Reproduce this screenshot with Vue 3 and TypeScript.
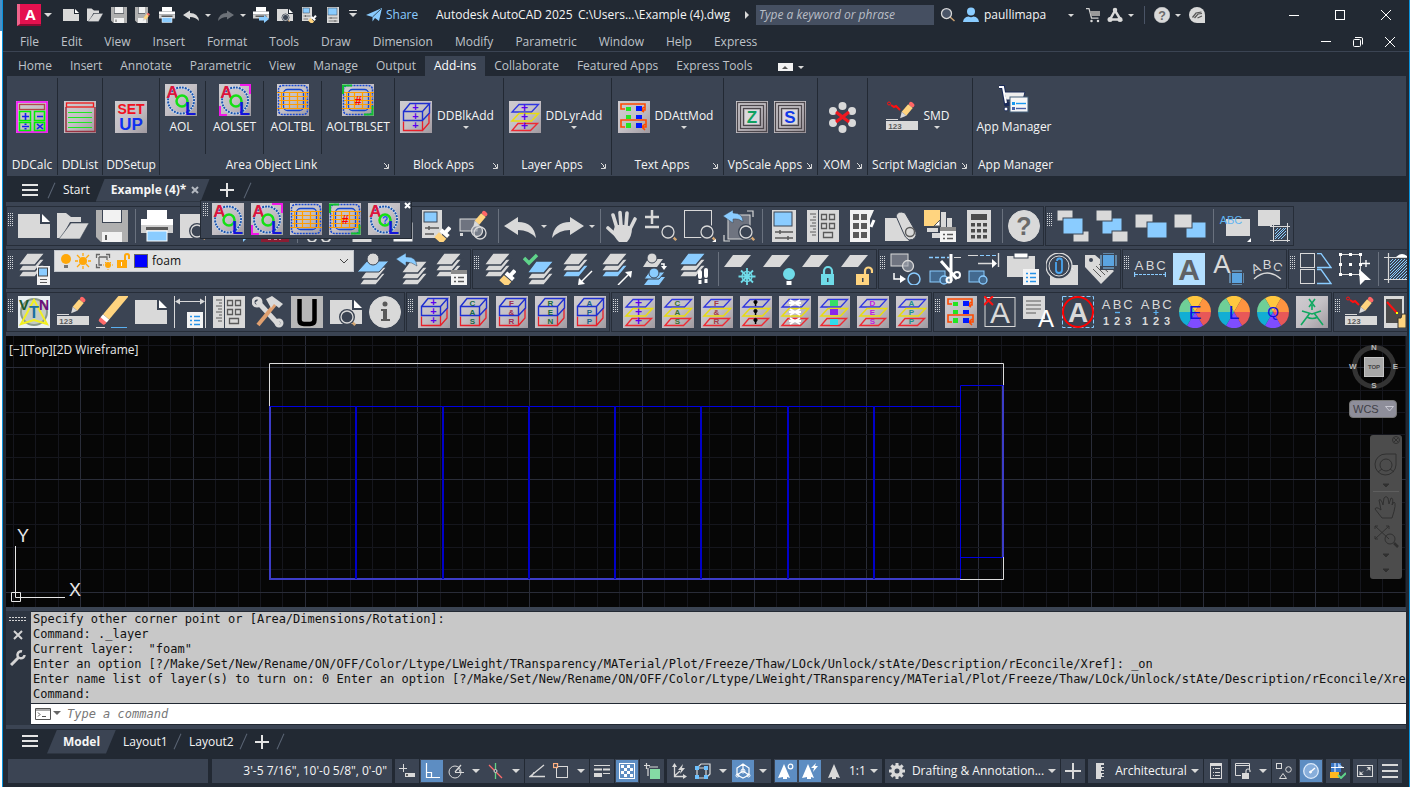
<script setup lang="ts">
import { h, ref } from 'vue'

const G = '#d9d9d9'
const B = '#8accff'
const Y = '#ffd47f'
const D = '#3b4453'
const K = '#5a5a5a'

const tile = '<rect width="32" height="32" fill="url(#metal)"/>'
const t = (x: number, y: number, s: number, c: string, str: string, extra = 'font-weight="bold"') =>
  `<text x="${x}" y="${y}" font-size="${s}" fill="${c}" text-anchor="middle" font-family="Liberation Sans, sans-serif" ${extra}>${str}</text>`
const line = (d: string, c: string, w = 1, extra = '') =>
  `<path d="${d}" fill="none" stroke="${c}" stroke-width="${w}" ${extra}/>`
const fill = (d: string, c: string, extra = '') => `<path d="${d}" fill="${c}" ${extra}/>`
const box = (x: number, y: number, w: number, hh: number, c: string, extra = '') =>
  `<rect x="${x}" y="${y}" width="${w}" height="${hh}" fill="${c}" ${extra}/>`
const ring = (x: number, y: number, r: number, c: string, w = 1, f = 'none') =>
  `<circle cx="${x}" cy="${y}" r="${r}" fill="${f}" stroke="${c}" stroke-width="${w}"/>`

const magnifier = (x: number, y: number, r = 6) =>
  line(`M${x + r * 0.7} ${y + r * 0.7}L${x + r * 0.7 + 4} ${y + r * 0.7 + 4}`, '#d3a672', 2.5) +
  ring(x, y, r + 1, D, 2) + ring(x, y, r, G, 1.3, D)
const pencil = (x: number, y: number) =>
  `<g transform="translate(${x} ${y}) rotate(40)">` +
  box(-3, 0, 6, 4, '#ff6666', 'rx="2"') + box(-3, 4, 6, 10, Y) + fill('M-3 14h6l-3 6z', G) + '</g>'
const brush = (x: number, y: number) =>
  `<g transform="translate(${x} ${y}) rotate(42)">` +
  box(-2, -9, 4, 7, '#fff', 'rx="1"') + box(-5, -3, 10, 4, '#fff') + box(-5, 2, 10, 7, Y) + '</g>'

const aol = (over = '') =>
  tile + line('M16 3.5a13 13 0 1 0 .1 0z', '#dfe6f2', 2.5) +
  line('M16 3.5a13 13 0 1 0 .1 0z', '#1c55ad', 2, 'stroke-dasharray="2 1"') + over +
  t(7.5, 14, 17, '#dc143c', 'A') + ring(17, 17, 5.5, '#14e014', 2.5) + t(25.5, 31, 18, '#1414d8', 'L')
const corners = (c: string, flip = false) =>
  flip ? line('M1 10V1.5H10M22 30.5H30.5V22', c, 2) : line('M21 1H31V10M1 22V31H8', c, 2)
const table = (over = '') =>
  tile +
  box(1.5, 1.5, 29, 29, 'none', 'rx="4" stroke="#1648d0" stroke-width="1.5" stroke-dasharray="2 1"') +
  box(6.5, 5.5, 20, 21, 'none', 'rx="4" stroke="#1648d0" stroke-width="1.3"') +
  line('M0 8.5H32M2 12.5H31M2 16.5H31M2 20.5H31M0 24.5H32M4.5 8V24M12.5 8V24M20.5 8V24M28.5 8V24', '#ff9d00', 1.2) + over

const block = (a: string, b: string, c: string, col = '#5a00f0') =>
  tile +
  line('M3.5 20.5V29.5H22.5V20M22.5 29.5L29 22V12', '#e8202a', 1.3) +
  line('M3.5 10.5H22.5V19.5H3.5zM3.5 10.5L10 2.5H29.5L22.5 10.5M29.5 2.5V12L22.5 19.5', '#1e2fd0', 1.4) +
  [a, b, c].map((s, i) => t(15.5, 9.5 + i * 9.3, a === '+' ? 11 : 8, col, s)).join('')
const layerBase =
  tile + line('M10 3.5H29.5L22.5 11H3z', '#2e35e0', 1.3) +
  line('M10 12.5H29.5L22.5 20H3z', '#e8dc10', 1.5) +
  line('M9 22.5H28.5L21.5 29.5H3z', '#ee2a33', 1.4)
const layer = (a: string, b: string, c: string, col = '#5a00f0') =>
  layerBase + [a, b, c].map((s, i) => t(15.5, (s === '+' ? 11 : 10) + i * 9.2, s === '+' ? 12 : 8, col, s)).join('')
const sheet = (y: number, c: string, x = 0) =>
  fill(`M${x + 9} ${y}h18l-10 12h-17z`, c, `stroke="${D}" stroke-width="1.4"`)
const stack = (c1 = G, c2 = G, c3 = G, y = 0, x = 0) => sheet(y + 12, c3, x) + sheet(y + 6, c2, x) + sheet(y, c1, x)
const oneSheet = fill('M9 2h18l-10 12h-17z', G)

const wheelColors = ['#ffc740', '#ff9440', '#e85858', '#7f4dff', '#12aed4', '#6fcf97']
const wheel = (ch: string, size = 19) => {
  const p = (deg: number) => {
    const a = (deg * Math.PI) / 180
    return `${(16 + 16 * Math.sin(a)).toFixed(2)} ${(16 - 16 * Math.cos(a)).toFixed(2)}`
  }
  return wheelColors
    .map((c, i) => fill(`M16 16L${p(i * 60 - 30)}A16 16 0 0 1 ${p(i * 60 + 30)}z`, c)).join('') +
    t(16, 16 + size * 0.36, size, '#1010e0', ch, '')
}
const abc = (mark: string) =>
  t(5, 13, 13, G, 'A', '') + t(16, 13, 13, G, 'B', '') + t(27, 13, 13, G, 'C', '') + mark +
  t(5, 29, 11, G, '1') + t(16, 29, 11, G, '2') + t(27, 29, 11, G, '3')
const gears = (c: string) =>
  Array.from({ length: 8 }, (_, i) => `<rect x="6.5" y="0" width="3" height="4" fill="${c}" transform="rotate(${i * 45} 8 8)"/>`).join('') +
  ring(8, 8, 4.2, c, 3.4)
const scaleTile = (ch: string, c: string) =>
  tile + [1, 4, 7].map((n) => box(n + 0.5, n + 0.5, 31 - 2 * n, 31 - 2 * n, 'none', 'stroke="#4c474c" stroke-width="1.3"')).join('') +
  box(9, 9, 14, 14, '#dcd8dc') + t(16, 22, 17, c, ch)
const attMod =
  tile + line('M7 8H3V3H27V9H24M26 6L23 9L26 11M7 26H3V19H28V26H25M27 23L24 26L27 29', '#ff4a00', 1.6) +
  box(8, 6, 5, 4, '#22e622') + box(8, 14, 5, 4, '#22e622') + box(8, 22, 5, 5, '#22e622') +
  box(18, 5, 6, 5, '#0018ff') + box(18, 14, 6, 4, '#0018ff') + box(18, 22, 6, 5, '#0018ff')
const penLabel = box(0, 20, 32, 9, G) + t(9, 28, 8, K, '123') + line('M0 18.5H12', G, 1)
const page = fill('M0 4h22v10h10v14H0z', G) + fill('M24 4l8 8h-8z', '#fff')
const list = (x: number, y: number, c = '#2792e8', top = '') =>
  box(x, y, 16, 16, '#f4f4f4') + top +
  line(`M${x + 3} ${y + 4.5}h2m2 0h6M${x + 3} ${y + 8.5}h2m2 0h6M${x + 3} ${y + 12.5}h2m2 0h6`, c, 1.4)
const windowList =
  box(16, 17, 16, 15, '#f4f4f4') + box(16, 17, 16, 4, '#8b8b8b') + line('M19 24.5h2m2 0h6M19 28.5h2m2 0h6', K, 1.4)
const shapes = (c: string, y = 0) =>
  box(1, y + 1, 17, 12, '#6f7480', `stroke="${c}"`) + ring(18, y + 13, 5.5, c, 1.3, 'rgba(160,165,175,.6)')
const shapesBlue =
  box(1, 18, 15, 11, '#436a90', `stroke="${B}"`) + ring(15, 27, 4, B, 1.3, '#436a90')
const bigBox = (x: number, y: number, w: number, hh: number, c: string) => box(x, y, w, hh, c, `stroke="${D}" stroke-width="1"`)
const crossbox = (x: number, y: number, s: number) =>
  box(x + 2, y + 2, s, s, '#5ba4e0') +
  line(`M${x} ${y + 2}v${s}M${x + s + 4} ${y + 2}v${s}M${x + 2} ${y}h${s}M${x + 2} ${y + s + 4}h${s}`, B, 1)
const hatch = (x: number, y: number, s: number) =>
  line(Array.from({ length: Math.floor(s / 3) }, (_, i) => `M${x} ${y + (i + 1) * 3}L${x + (i + 1) * 3} ${y}M${x + i * 3} ${y + s}L${x + s} ${y + i * 3}`).join(''), B, 1)
const hand = (c: string) =>
  line('M11 18L7 5M15 16L14 2.5M20 16L21 3M24 19L29 9M12 27L2 18', c, 3.6, 'stroke-linecap="round"') +
  fill('M9 16Q16 13 26 17Q26 27 21 32H13Q8 27 7 22z', c)
const lockBody = (c: string, open = false) =>
  line(open ? 'M24 23V18a3.5 3.5 0 0 1 7 0V20' : 'M22 23V18a4 4 0 0 1 8 0V23', c, 2.2) +
  box(open ? 15 : 19, 21, 13, 11, c) + box(open ? 21 : 25, 25, 1.5, 4, D)
const bulb = (c: string) => ring(26, 21, 5, c, 2, c) + box(23.5, 28, 5, 4, '#fff')
const props = box(4, 0, 24, 32, G) + box(6, 2, 18, 14, B, `stroke="${D}"`) + line('M7 22H25M7 28H25M12 20V24M20 26V30', K, 1.5)
const undo = (c: string) => fill('M0 16L14 7V12Q30 12 32 28Q25 20 14 20V25z', c)
const textA = (x: number, y: number, s: number, c: string) => t(x, y, s, c, 'A', '')

const big: Record<string, string> = {
  newf: page,
  open: fill('M0 3h9l5 4h10v5H13L4 28H0z', G) + fill('M14 13h18l-9 16H2z', G, `stroke="${D}" stroke-width=".6"`),
  save: fill('M0 0h6v13h20V0h6v32H5l-5-5z', '#b0b0b0') + box(7, 0, 18, 12, '#f2f2f2') + box(6, 22, 20, 10, '#f2f2f2') + box(9, 25, 2, 5, K),
  saveas: fill('M0 0h6v13h14V0h6v32H5l-5-5z', '#b0b0b0') + box(7, 0, 13, 12, '#f2f2f2') + box(6, 22, 16, 10, '#f2f2f2') + pencil(28, 13),
  print: box(6, 0, 20, 9, '#fff') + box(0, 9, 32, 6, '#fff') + box(0, 15, 32, 8, '#cfcfcf') + box(5, 17, 22, 3, K) + box(6, 21, 20, 10, B, 'stroke="#fff"'),
  plot: box(6, 0, 20, 9, '#fff') + box(0, 9, 32, 6, '#fff') + box(0, 15, 32, 8, '#cfcfcf') + box(5, 17, 22, 3, K) + fill('M12 20h10v-4l10 8l-10 8v-5H12z', B),
  preview: page + magnifier(17, 21, 6),
  undo: undo(G),
  undoT: undo(G),
  redoT: `<g transform="translate(32 0) scale(-1 1)">${undo('#6c7178')}</g>`,
  redo: `<g transform="translate(32 0) scale(-1 1)">${undo(G)}</g>`,
  matchp: box(2, 0, 20, 28, G) + box(4, 2, 13, 10, B, `stroke="${D}"`) + line('M5 18H19M5 24H14M9 16V20', K, 1.5) + brush(24, 24),
  props,
  share: fill('M0 16L32 2L26 28L18 22L13 29V20z', B) + line('M13 20L30 4', '#222933', 1.5),
  publish: box(0, 6, 22, 20, G) + fill('M18 20h6v-5l8 9l-8 8v-5h-6z', B),
  dwf: box(4, 4, 22, 16, G) + box(3, 16, 28, 16, '#8c1d33') + box(10, 28, 3, 1.5, '#fff') + box(16, 28, 3, 1.5, '#fff') + box(21, 28, 2, 1.5, '#fff'),
  cut: line('M8 2L22 26M24 2L10 26', G, 3) + ring(9, 28, 4, G, 2) + ring(23, 28, 4, G, 2),
  copy: box(2, 2, 18, 24, G) + bigBox(10, 8, 20, 25, G),
  paste: box(2, 4, 20, 24, G) + bigBox(12, 12, 20, 20, '#f4f4f4'),
  blocked: shapes(G, 8) + box(1, 23, 3, 3, G) + ring(21, 23, 6, G, 1.3) + pencil(27, 2),
  pan: hand(G),
  zoomrt: line('M0 7H14M7 0V14M0 17H14', G, 2.5) + magnifier(23, 22, 6),
  zoomwin: box(0.5, 0.5, 27, 27, 'none', `stroke="${G}"`) + magnifier(23, 22, 6) + fill('M32 29v3h-4z', '#fff'),
  zoomprev: box(5, 5, 22, 24, '#6f7480', `stroke="${G}"`) + line('M24 1H30V7M1 25V31H7', G, 1.2) + fill('M0 6L10 0V3Q20 3 20 12Q16 8 10 9V13z', B, `stroke="${D}" stroke-width=".5"`) + magnifier(23, 22, 6),
  dcenter: box(0, 0, 11, 32, G) + box(12, 0, 20, 32, G) + line('M9 4H3M9 7H6M9 10H3M9 13H5M9 16H3M9 19H6M9 22H3M9 25H5', K) + line('M14.5 4.5h5v5h-5zM22.5 4.5h5v5h-5zM14.5 13.5h5v5h-5zM22.5 13.5h5v5h-5zM16.5 22.5h9v5h-9z', K, 1.3),
  palettes: fill('M4 0H28L24 9V32H4z', '#f2f2f2') + [4, 13, 22].map((y) => box(7, y, 6, 6, K) + box(15, y, 6, 6, K)).join('') + line('M25 17L28 10', '#fff', 3),
  sheetset: fill('M0 8H13L24 31H0z', G) + fill('M11 6Q13 0 20 3L31 22Q32 30 24 30Q20 28 18 22z', G, `stroke="${D}"`) + ring(25, 22, 4.5, K, 1.4, G),
  markup: box(0, 0, 16, 16, Y) + fill('M16 10v6h-6z', '#fff', 'stroke="#5a5a5a"') + box(17, 2, 5, 16, G) + box(23, 8, 5, 9, G) + box(3, 18, 11, 4, G) + box(8, 23, 8, 5, G) + windowList,
  calc: box(4, 0, 24, 32, G) + box(8, 4, 16, 6, '#4b4b4b') + [13, 19, 25].map((y) => [8, 14, 20].map((x) => box(x, y, 4, 3.5, '#4b4b4b')).join('')).join(''),
  help: ring(16, 16, 15.5, G, 1, G) + t(16, 25, 25, '#6a6a6a', '?'),
  front: bigBox(0, 0, 16, 11, G) + bigBox(16, 21, 16, 11, G) + bigBox(6, 8, 20, 16, B),
  back: bigBox(6, 8, 20, 16, B) + bigBox(0, 0, 16, 11, G) + bigBox(16, 21, 16, 11, G),
  above: bigBox(0, 4, 18, 14, G) + bigBox(12, 12, 20, 16, B),
  under: bigBox(12, 12, 20, 16, B) + bigBox(0, 4, 18, 14, G),
  textfront: box(7, 9, 24, 17, G) + t(12, 14, 11, '#5fb4f2', 'ABC', '') + fill('M32 28v4h-4z', '#fff'),
  hatchback: box(0, 0, 22, 16, G) + box(14, 15, 17, 17, D) + line('M15.5 13V32M29.5 13V32M12 16.5H32M12 30.5H32', G) + hatch(17, 18, 11),
  layerprops: stack() + box(19, 13, 13, 19, '#f2f2f2') + box(20.5, 15, 9, 8, B, 'stroke="#444"') + line('M22 26.5H29M22 29.5H29', K),
  curlayer: sheet(20, G, 2) + sheet(14, G, 3) + fill('M10 8h22l-10 11H0z', B, `stroke="${D}"`) + ring(16, 6, 6, D, 1, G),
  prevlayer: stack(G, G, G, 8, 5) + fill('M0 6L10 0V4Q20 3 21 13Q16 9 10 9V13z', B, `stroke="${D}" stroke-width=".5"`),
  layerstate: stack() + windowList,
  laymatch: stack() + brush(25, 24),
  laymcur: stack(B, G, G, 8, 4) + line('M1 5L6 10L14 2', '#5fd38a', 3.5),
  layiso: stack(G, G, B) + line('M30 18L19 29', '#fff', 1.5) + fill('M16 32l1-7l6 6z', '#fff'),
  layuniso: stack(G, G, B) + line('M17 32L27 22', '#fff', 1.5) + fill('M31 18l-1 7l-6-6z', '#fff'),
  laycopy: fill('M8 6h15l-6 8H3z', G) + ring(12, 5, 5, D, 1, G) + fill('M10 24h15l-6 8H4z', B) + fill('M9 19h16l-6 7H4z', B, `stroke="${D}"`) + ring(14, 20, 5, D, 1, B) + line('M21 11H24V14', '#fff', 1.5) + fill('M21 13h6l-3 4z', '#fff'),
  laywalk: stack(B, G, G) + box(19, 17, 4, 9, '#fff', 'rx="2"') + box(19.5, 27, 3, 4, '#fff') + box(25, 15, 4, 10, '#fff', 'rx="2"') + box(25.5, 26, 3, 4, '#fff'),
  layfrz: oneSheet + line('M23 15V32M14.5 23.5H31.5M17 17.5L29 29.5M29 17.5L17 29.5', '#6fdbe8', 1.8) + ring(23, 23.5, 5, '#6fdbe8', 1.3),
  layoff: oneSheet + bulb('#6fdbe8'),
  laylck: oneSheet + lockBody('#6fdbe8'),
  layulk: oneSheet + lockBody(Y, true),
  cpnest: shapes(G) + line('M4 20V26H12', '#fff', 1.5) + fill('M10 22l6 4l-6 4z', '#fff') + ring(24, 26, 6, B, 1.5),
  ncut: line('M0 4.5H20', B, 1.3, 'stroke-dasharray="4 2"') + line('M25 4.5H32', G) + shapesBlue + line('M22 1V28M12 8L28 26', '#fff', 3) + ring(20, 27, 2.5, '#fff', 2) + ring(28, 22, 3, '#fff', 2),
  nextend: line('M0 2.5H10', G) + line('M12 2.5H28', B, 1.2, 'stroke-dasharray="4 2"') + line('M30.5 0V14M10 10.5H26', G, 1.4) + fill('M24 6l5 4.5l-5 4.5z', '#fff') + shapesBlue,
  pastespec: box(0, 3, 28, 21, G) + box(7, 0, 14, 5, '#fff', `stroke="${D}"`) + list(16, 16),
  attach: box(4, 12, 28, 20, G) + fill('M20 12h4l4 5z', '#fff') + ring(13, 13, 13, G, 1.3, D) + ring(13, 13, 10, G, 1) + line('M10 9V17a3 3 0 0 0 6 0V8a2 2 0 0 0-5 0', '#4ba6f0', 1.8),
  tag: fill('M0 2H10L29 18L16 31L0 14z', G) + ring(6, 7, 2, D, 0, D) + line('M8 16L16 24M11 13L20 22M14 11L23 19', K, 1) + box(15, 0, 17, 17, D) + crossbox(16, 0, 11),
  abcw: t(5, 17, 13, G, 'A', '') + t(16, 17, 13, G, 'B', '') + t(27, 17, 13, G, 'C', '') + line('M1 21.5H31', B, 1.2, 'stroke-dasharray="3 1"') + line('M.5 19V24M31.5 19V24', B, 1.4),
  abig: box(0, 0, 32, 32, '#b3dfff') + t(16, 27, 30, '#5f6266', 'A'),
  ascale: t(10, 20, 26, G, 'A', '') + crossbox(18, 18, 10),
  arctext: `<g transform="rotate(-25 5 18)">${t(6, 20, 13, G, 'A', '')}</g>` + t(16, 16, 13, G, 'B', '') + `<g transform="rotate(25 28 18)">${t(25, 19, 12, G, 'C', '')}</g>` + line('M3 26Q16 14 30 26', G, 1.3),
  mirrorb: box(0.5, 0.5, 14, 14, 'none', `stroke="${G}"`) + box(0.5, 16.5, 14, 14, 'none', `stroke="${G}"`) + line('M17 .5H21L31 14.5H17M17 16.5H21L31 30.5H17', B, 1.3),
  selectb: box(1.5, 1.5, 20, 20, 'none', `stroke="${G}"`) + [0, 10, 20].map((x) => [0, 10, 20].map((y) => box(x, y, 3, 3, '#fff')).join('')).join('') + line('M23 10.5H31M27 7V14', '#fff', 1.3) + fill('M20 16L32 27H26L21 32z', '#fff'),
  hatchedit: line('M4.5 0V30M0 4.5H32M0 26.5H32', G, 1.2) + hatch(6, 6, 20) + fill('M12 4q6-6 12 0z', '#fff'),
  vtn: box(0, 0, 32, 32, '#e9eef0') + ring(16, 16, 13, '#8a9a8a', 2, '#c4ccc4') + line('M16 4L3 28L16 24L29 28z', '#f2ef20', 2) + t(6, 14, 15, '#1c5a2b', 'V') + t(26, 14, 14, '#6b0d7c', 'N') + t(16, 22, 16, '#1a6fa0', 'T'),
  pen123: penLabel + pencil(27, 2),
  erase: `<g transform="translate(5 27) rotate(-50)">` + box(0, -4, 5, 8, '#ff6b6b', 'rx="2"') + box(4, -4, 4, 8, '#fff') + box(8, -4, 32, 8, Y) + '</g>' + line('M0 31.5H9', G) + line('M15 31.5H31', '#5ab0f0'),
  dimlist: line('M.5 0V32M31.5 0V32M2 5.5H30', G) + fill('M1 5.5l5-3v6zM31 5.5l-5-3v6z', G) + list(13, 16),
  tools: line('M5 5L27 29', G, 5) + ring(5, 6, 4, G, 3) + ring(27, 27, 3, G, 3) + line('M24 7L6 29', '#e0a070', 4) + fill('M14 3L20 0L31 8L27 12L22 8L19 12z', G),
  ubox: box(0, 0, 32, 32, '#b8b8b8') + line('M8.5 3V24Q8.5 28 13 28H19Q23.5 28 23.5 24V3', '#000', 4.5),
  info: ring(16, 16, 15.5, G, 1, G) + ring(16, 8, 2.5, K, 0, K) + fill('M12 13h6v10h3v2h-9v-2h2v-8h-2z', K),
  blk1: block('+', '+', '+'), blk2: block('C', 'A', 'S', '#18694a'), blk3: block('F', '&amp;', 'R', '#9e2b52'), blk4: block('R', 'E', 'N', '#15693f'), blk5: block('A', 'P', 'P', '#1a6186'),
  lyr1: layer('+', '+', '+'), lyr2: layer('C', 'A', 'S', '#3a7330'), lyr3: layer('F', '&amp;', 'R', '#a53b48'),
  lyr4: layerBase + [6, 15, 24].map((y) => ring(15.5, y, 1.6, '#000', 1, '#000') + box(14.8, y + 1, 1.5, 3, '#000')).join(''),
  lyr5: layerBase + [7, 16, 25].map((y) => line(`M11 ${y - 3}L21 ${y + 3}M21 ${y - 3}L11 ${y + 3}M10 ${y}H22`, '#fff', 2)).join(''),
  lyr6: layerBase + box(12, 4, 8, 6, '#36e066') + box(12, 13, 8, 6, '#8a28e8') + box(12, 23, 8, 6, '#30dcec'),
  lyr7: layer('D', 'E', 'S', '#c018e0'), lyr8: layer('A', 'P', 'P', '#20908a'),
  attmod: attMod,
  abox: box(1, 1.5, 30, 29, 'none', `stroke="${G}"`) + textA(16, 27, 30, G) + line('M0 0L9 9M9 0L0 9', '#ff1010', 2),
  apage: box(0, 0, 22, 23, G) + line('M3 5H18M3 9H18M3 13H18M3 17H13', K) + textA(23, 31, 24, '#fff'),
  acircle: box(0.5, 0.5, 31, 31, 'none', `stroke="${B}" stroke-dasharray="4 2"`) + t(16, 26, 28, G, 'A') + ring(16, 16, 15, '#f00', 2),
  abc1: abc(line('M14 16.5H19', '#5ab0f0', 1.4)), abc2: abc(line('M13.5 16.5H18.5M16 14V19', '#5ab0f0', 1.2)),
  wheelE: wheel('E'), wheelL: wheel('L'), wheelQ: wheel('Q', 15),
  ghost: tile + line('M13 3L19 11M19 3L13 11M16 9V14M6 15L16 18L25 15M14 17L5 29M18 17L27 29M11 21Q16 24 22 21', '#10a860', 1.6),
  smd: penLabel + pencil(27, 2) + ring(3, 2.5, 1.5, '#ff1010', 1) + line('M5 4L8 6L10 5L14 9', '#ff1010', 2),
  phone: box(0, 0, 20, 32, G) + box(2, 3, 16, 24, '#4b4b4b') + line('M3 6L13 17', '#ff1010', 2) + box(12, 16, 2, 2, '#ff0') + fill('M14 32V22h3l1-4h4v14z', Y, 'stroke="#333"'),
  aol: aol(), aolset: aol(corners('#f018e8')), aoltbl: table(),
  aoltblset: table(corners('#10c030', true) + t(16, 21, 12, '#f00', '#')), aolq: aol(t(17, 21, 10, '#1a50ff', '?')),
  ddcalc: tile + box(1, 1, 30, 30, 'none', 'stroke="#f0f" stroke-width="1.5"') + box(3.5, 3.5, 25, 5, 'none', 'stroke="#b04848" stroke-width="1.3"') + line('M3.5 10.5h11v9h-11zM18.5 10.5h10v9h-10zM3.5 21.5h11v8h-11zM18.5 21.5h10v8h-10z', '#00f000', 1.5) + line('M6 15.5H13M9.5 12V19M21 15.5H27M6 25.5H13M21 23L27 28M27 23L21 28', '#1020f0', 1.6) + box(8.5, 22.5, 2, 1.5, '#1020f0') + box(8.5, 27, 2, 1.5, '#1020f0'),
  ddlist: tile + box(2.5, 2, 27, 4, 'none', 'stroke="#f01818" stroke-width="1.3"') + line('M2 6V30.5H31V6', '#983040', 1.5) + line('M4 11.5H28M4 16.5H28M4 21.5H28M4 26.5H28', '#20e820', 1.2),
  ddsetup: tile + t(16, 13, 14, '#f01020', 'SET') + t(16, 29, 17, '#1030f0', 'UP'),
  scaleZ: scaleTile('Z', '#10a060'), scaleS: scaleTile('S', '#1038e8'),
  xom: [[15.5, 5], [25, 10], [25, 22], [15.5, 28], [6, 22], [6, 10]].map(([x, y]) => ring(x, y, 4, G, 0, G)).join('') + line('M9 11L22 21M22 11L9 21', '#f01820', 3.2),
  appmgr: line('M1 3H5L8 20H22', '#1a2a58', 4) + fill('M6 8H27L25 16H8z', '#eee', 'stroke="#1a2a58"') + line('M1 3H5L8 19', '#fff', 2) + ring(8, 25, 2, '#1a2a58', 1, '#fff') + box(12, 13, 18, 15, '#f6f6f6', 'stroke="#44607c"') + box(14, 18, 3, 3, '#1898f0') + box(14, 23, 3, 3, '#4860a8') + line('M18 19.5H28', '#1898f0', 1.4) + line('M18 24.5H28', '#4860a8', 1.4),
  person: ring(16, 9, 8, B, 0, B) + fill('M0 30Q1 20 11 19Q16 22 21 19Q31 20 32 30z', B),
  search: line('M20 20L29 28', '#c9a070', 3) + ring(13, 13, 10, G, 2.5, '#4a5568'),
  cart: line('M2 3H8L13 22H27', '#d0d0d0', 2.5) + fill('M10 8H30V18H12z', '#9a9a9a') + ring(13, 28, 2.5, G, 0, G) + ring(26, 28, 2.5, G, 0, G),
  tri: line('M16 7L6 25H27z', G, 5) + ring(16, 6, 4.5, G, 0, G) + ring(6, 25, 5, G, 0, G) + ring(26, 25, 5, G, 0, G),
  chat: fill('M16 0a16 16 0 1 0 0 32H32V16A16 16 0 0 0 16 0z', G) + line('M7 21L14 12L25 10M11 22L18 14L26 13M17 22L26 18', '#555', 2.5),
}

const small: Record<string, string> = {
  dyn: line('M0 5.5H8M4.5 1V9', G, 1) + box(6, 10, 10, 4, G) + box(7, 11, 2, 2, K),
  ortho: line('M2.5 0V14.5H16M2.5 9.5H7.5V14', '#fff', 1.2),
  polar: ring(7, 9, 6, G) + line('M7 9L13 2M7 9.5H16', G, 1.2) + line('M10 5.5Q12 6.5 12 9', G, 1),
  iso: line('M7.5 0V16', '#63d488', 1.3) + line('M1 2L14 15', '#ff6b6b', 1.2) + ring(7.5, 8, 1.5, G, 1, D),
  otrack: line('M15 2L1 13.5H16', G, 1.3) + line('M3 13L5 9', G),
  osnap: box(3.5, 3.5, 11, 11, 'none', `stroke="${G}"`) + box(0.5, 0.5, 4, 4, D, 'stroke="#ffb080" stroke-width="1.3"'),
  lw: line('M0 2.5H16', G, 1) + line('M0 6.5H8M9 6.5H16', G, 2) + line('M0 12H8', G, 4) + line('M9 10.5H16', G, 1),
  trans: box(0.5, 0.5, 15, 15, 'none', 'stroke="#fff"') + [0, 1, 2, 3].map((r) => [0, 1, 2, 3].map((c) => ((r + c) % 2 ? '' : box(2 + c * 3, 2 + r * 3, 3, 3, '#fff'))).join('')).join(''),
  cycle: line('M0 2.5H6M2.5 0V6M4 5V13M5 4H14', G, 1.2) + box(6, 6, 10, 10, '#84dba4'),
  ucs: line('M3.5 3V13.5H14M3.5 13L9 8', G, 1.3) + fill('M1 4l2.5-4l2.5 4zM12 11l4 2.5l-4 2.5z', G) + fill('M12 1L7 7h3l-1 4l5-6h-3z', G),
  cube3d: line('M2 5H11V15H2zM2 5L6 1H15V11L11 15', G, 1.2) + box(0, 3, 4, 4, '#6ec1ff') + box(9, 3, 4, 4, '#6ec1ff') + box(0, 12, 4, 4, '#6ec1ff') + box(9, 12, 4, 4, '#6ec1ff'),
  gizmo: line('M8 1L14 5V12L8 15L2 12V5zM8 1V8L2 12M8 8L14 12', '#fff', 1.2) + ring(8, 8, 2, '#fff') + ring(2.5, 12.5, 1.5, '#fff') + ring(13.5, 12.5, 1.5, '#fff'),
  ann1: fill('M6 1L12 15L9 14V16H5V14L0 15z', '#fff') + ring(12.5, 3.5, 2.3, '#fff', 1.2),
  ann2: fill('M6 1L12 15L9 14V16H5V14L0 15z', '#fff') + fill('M14 0L9 5h3l-1 4l5-6h-3z', '#fff'),
  ann3: fill('M8 1L14 15L10 14V16H6V14L2 15z', G),
  gear: gears(G),
  plus: line('M0 8H16M8 0V16', G, 2),
  ruler: fill('M0 0H8V2H5V4H8V5H6V7H8V8H5V10H8V11H6V13H8V14H5V16H0z', G, 'transform="translate(4 0)"'),
  qprops: box(2.5, 0.5, 11, 15, 'none', `stroke="${G}"`) + box(3, 1, 10, 2, G) + line('M5 5.5H6M7 5.5H12M5 9.5H6M7 9.5H12M5 12.5H6M7 12.5H12', G, 1.2),
  lockui: line('M6 12.5H.5V.5H14.5V6', G) + line('M0 2.5H15', G, 1) + box(7, 10, 7, 6, G) + line('M11 10V8a2 2 0 0 1 4 0V9', G, 1.2),
  isolate: box(0.5, 0.5, 5, 5, 'none', `stroke="${G}"`) + ring(12.5, 6.5, 2.8, G) + line('M7 10.5L3.5 15.5H10.5z', G, 1),
  hw: ring(8, 8, 7.3, '#dceafa', 1.3, '#87aedb') + line('M8 8.5L12 5', '#fff', 1.4) + ring(7.5, 9, 1, '#fff', 1, '#fff'),
  trust: box(1, 0, 10, 9, '#3a78c8') + fill('M8 0L14 5H8z', '#a8c8f0') + box(0, 9, 9, 6, '#ffb820') + line('M5 0V9M1 4.5H14', '#fff', 1) + line('M8 12L11 15L16 10', '#5fd38a', 2),
  full: box(0.5, 2.5, 15, 11, 'none', `stroke="${G}"`) + line('M3 11.5L6 8.5M10 7.5L13 4.5', G, 1) + fill('M2.5 8v4h4zM13.5 8V4h-4z', G),
  menu: line('M0 2H16M0 8H16M0 14H16', G, 2),
}

const Ico = (p: { n: string }) =>
  h('svg', {
    'aria-hidden': 'true',
    viewBox: p.n in small ? '0 0 16 16' : '0 0 32 32',
    innerHTML: small[p.n] ?? big[p.n] ?? '',
  })

const quick = ['newf', 'open', 'save', 'saveas', 'print', 'undoT', '>', 'redoT', '>', 'plot', 'preview', 'matchp', 'props']
const menus = ['File', 'Edit', 'View', 'Insert', 'Format', 'Tools', 'Draw', 'Dimension', 'Modify', 'Parametric', 'Window', 'Help', 'Express']
const tabs = ['Home', 'Insert', 'Annotate', 'Parametric', 'View', 'Manage', 'Output', 'Add-ins', 'Collaborate', 'Featured Apps', 'Express Tools']
const activeTab = ref('Add-ins')

interface Panel { title: string; kind: 'icons' | 'tall' | 'wide'; items: [string, string][]; launch?: boolean }
const panels: Panel[] = [
  { title: 'DDCalc', kind: 'icons', items: [['ddcalc', '']] },
  { title: 'DDList', kind: 'icons', items: [['ddlist', '']] },
  { title: 'DDSetup', kind: 'icons', items: [['ddsetup', '']] },
  { title: 'Area Object Link', kind: 'tall', launch: true, items: [['aol', 'AOL'], ['aolset', 'AOLSET'], ['aoltbl', 'AOLTBL'], ['aoltblset', 'AOLTBLSET']] },
  { title: 'Block Apps', kind: 'wide', launch: true, items: [['blk1', 'DDBlkAdd']] },
  { title: 'Layer Apps', kind: 'wide', launch: true, items: [['lyr1', 'DDLyrAdd']] },
  { title: 'Text Apps', kind: 'wide', launch: true, items: [['attmod', 'DDAttMod']] },
  { title: 'VpScale Apps', kind: 'icons', launch: true, items: [['scaleZ', ''], ['scaleS', '']] },
  { title: 'XOM', kind: 'icons', launch: true, items: [['xom', '']] },
  { title: 'Script Magician', kind: 'wide', launch: true, items: [['smd', 'SMD']] },
  { title: 'App Manager', kind: 'tall', items: [['appmgr', 'App Manager']] },
]

/* '|' is a separator, '>' a drop-down arrow, '#' the layer list */
const rows: string[][][] = [
  [
    ['newf', 'open', 'save', '|', 'print', 'preview', 'publish', 'dwf', '|', 'cut', 'copy', 'paste', 'matchp', 'blocked', '|', 'undo', '>', 'redo', '>', '|', 'pan', 'zoomrt', 'zoomwin', 'zoomprev', '|', 'props', 'dcenter', 'palettes', 'sheetset', 'markup', 'calc', '|', 'help'],
    ['front', 'back', 'above', 'under', '|', 'textfront', 'hatchback'],
  ],
  [
    ['layerprops', '#', 'curlayer', 'prevlayer', 'layerstate'],
    ['laymatch', 'laymcur', 'layiso', 'layuniso', 'laycopy', 'laywalk', '|', 'layfrz', 'layoff', 'laylck', 'layulk'],
    ['cpnest', 'ncut', 'nextend', 'pastespec', 'attach', 'tag'],
    ['abcw', 'abig', 'ascale', 'arctext'],
    ['mirrorb', 'selectb', '|', 'hatchedit'],
  ],
  [
    ['vtn', 'pen123', 'erase', 'newf', 'dimlist', 'dcenter', 'tools', 'ubox', 'preview', 'info'],
    ['blk1', 'blk2', 'blk3', 'blk4', 'blk5'],
    ['lyr1', 'lyr2', 'lyr3', 'lyr4', 'lyr5', 'lyr6', 'lyr7', 'lyr8'],
    ['attmod', 'abox', 'apage', 'acircle', 'abc1', 'abc2', 'wheelE', 'wheelL', 'wheelQ', 'ghost'],
    ['smd', 'phone'],
  ],
]
const floating = ['aol', 'aolset', 'aoltbl', 'aoltblset', 'aolq']

/* model-space grid: a major line every fifth step */
const step = 22.45
const gridX = Array.from({ length: 160 }, (_, i) => ({ p: Math.round(7 + i * step), major: i % 5 === 3 }))
const gridY = Array.from({ length: 60 }, (_, i) => ({ p: Math.round(8.6 + i * step), major: i % 5 === 1 }))
const studs = Array.from({ length: 7 }, (_, i) => Math.round(350.3 + i * 86.25))

const log = [
  'Specify other corner point or [Area/Dimensions/Rotation]:',
  'Command: ._layer',
  'Current layer:  "foam"',
  'Enter an option [?/Make/Set/New/Rename/ON/OFF/Color/Ltype/LWeight/TRansparency/MATerial/Plot/Freeze/Thaw/LOck/Unlock/stAte/Description/rEconcile/Xref]: _on',
  'Enter name list of layer(s) to turn on: 0 Enter an option [?/Make/Set/New/Rename/ON/OFF/Color/Ltype/LWeight/TRansparency/MATerial/Plot/Freeze/Thaw/LOck/Unlock/stAte/Description/rEconcile/Xref]:',
  'Command:',
]

/* '*' marks an active toggle, '>' an arrow, '=' a caption */
const status: { gap?: boolean; items: string[] }[] = [
  { items: ['dyn'] },
  { items: ['*ortho', 'polar', '>', 'iso', '>'] },
  { items: ['otrack', 'osnap', '>'] },
  { items: ['lw'] },
  { items: ['*trans'] },
  { items: ['cycle'] },
  { gap: true, items: ['ucs', 'cube3d', '>', '*gizmo', '>'] },
  { gap: true, items: ['*ann1', '*ann2', 'ann3', '=1:1', '>'] },
  { gap: true, items: ['gear', '=Drafting & Annotation...', '>'] },
  { items: ['plus'] },
  { gap: true, items: ['ruler', '=Architectural', '>'] },
  { items: ['qprops'] },
  { gap: true, items: ['lockui', '>'] },
  { items: ['isolate'] },
  { gap: true, items: ['*hw'] },
  { gap: true, items: ['trust'] },
  { gap: true, items: ['full'] },
  { items: ['menu'] },
]
</script>

<template>
  <div class="desk">
    <svg class="defs" aria-hidden="true">
      <defs>
        <linearGradient id="metal" x1="0" y1="0" x2="1" y2="1">
          <stop offset="0" stop-color="#cfccd0" /><stop offset=".5" stop-color="#c4c0c5" /><stop offset="1" stop-color="#a09aa0" />
        </linearGradient>
      </defs>
    </svg>
    <div class="app">
      <header class="title">
        <button class="logo" aria-label="Application menu">A</button>
        <i class="caret big"></i>
        <div class="quick">
          <template v-for="(q, i) in quick" :key="i">
            <i v-if="q === '>'" class="caret"></i>
            <button v-else :aria-label="q"><Ico :n="q" class="i16" /></button>
          </template>
        </div>
        <i class="custom"></i>
        <button class="share"><Ico n="share" class="i16" />Share</button>
        <span class="product">Autodesk AutoCAD 2025</span>
        <span class="file">C:\Users...\Example (4).dwg</span>
        <i class="caret side"></i>
        <input class="find" type="text" aria-label="Search" placeholder="Type a keyword or phrase" />
        <button class="gl" aria-label="Find"><Ico n="search" class="i16" /></button>
        <button class="user"><Ico n="person" class="i16" />paullimapa</button>
        <i class="caret"></i>
        <button class="gl cartb" aria-label="Store"><Ico n="cart" class="i16" /></button>
        <button class="gl" aria-label="Autodesk"><Ico n="tri" class="i16" /></button>
        <i class="caret"></i>
        <i class="vline"></i>
        <button class="gl" aria-label="Help"><Ico n="help" class="i16" /></button>
        <i class="caret"></i>
        <button class="gl" aria-label="Assistant"><Ico n="chat" class="i16" /></button>
        <div class="win">
          <button aria-label="Minimize"><svg width="12" height="12"><path d="M1 6.5H11" /></svg></button>
          <button aria-label="Maximize"><svg width="12" height="12"><rect x="1.5" y="1.5" width="9" height="9" /></svg></button>
          <button aria-label="Close"><svg width="12" height="12"><path d="M1 1L11 11M11 1L1 11" /></svg></button>
        </div>
      </header>

      <nav class="menu">
        <button v-for="m in menus" :key="m">{{ m }}</button>
        <div class="win inner">
          <button aria-label="Minimize drawing"><svg width="12" height="12"><path d="M1 5.5H11" /></svg></button>
          <button aria-label="Restore drawing"><svg width="12" height="12"><path d="M3 1.5H9.5Q10.5 1.5 10.5 3V8.5" /><rect x="1.5" y="3.5" width="7" height="7" rx="1" /></svg></button>
          <button aria-label="Close drawing"><svg width="12" height="12"><path d="M1 1L11 11M11 1L1 11" /></svg></button>
        </div>
      </nav>

      <nav class="tabs">
        <button v-for="x in tabs" :key="x" :class="{ on: x === activeTab }" @click="activeTab = x">{{ x }}</button>
        <button class="collapse" aria-label="Minimize ribbon"><i class="up"></i></button>
        <i class="caret"></i>
      </nav>

      <section class="ribbon">
        <div v-for="p in panels" :key="p.title" class="panel">
          <div class="body" :class="p.kind">
            <button v-for="it in p.items" :key="it[0]" :aria-label="it[1] || p.title">
              <Ico :n="it[0]" class="i32" />
              <span v-if="it[1]" class="cap">{{ it[1] }}<i v-if="p.kind === 'wide'" class="caret"></i></span>
            </button>
          </div>
          <div class="ptitle">
            <span>{{ p.title }}</span>
            <svg v-if="p.launch" width="6" height="6" viewBox="0 0 6 6"><path d="M1 0L4 3M5.5 1V5.5H1M5 5L3 3" /></svg>
          </div>
        </div>
      </section>

      <div class="files">
        <button class="ham" aria-label="Drawing list"><i></i><i></i><i></i></button>
        <i class="slash"></i>
        <button class="start">Start</button>
        <button class="ftab">Example (4)*<svg width="8" height="8"><path d="M1 1L7 7M7 1L1 7" /></svg></button>
        <button class="add" aria-label="New drawing"><svg width="14" height="14"><path d="M0 7H14M7 0V14" /></svg></button>
        <i class="slash"></i>
      </div>

      <section class="dock">
        <div v-for="(row, r) in rows" :key="r" class="trow">
          <div v-for="(bar, b) in row" :key="b" class="bar">
            <i class="grip"></i>
            <template v-for="(k, i) in bar" :key="i">
              <i v-if="k === '|'" class="sep"></i>
              <button v-else-if="k === '>'" class="drop" aria-label="More"><i class="caret"></i></button>
              <div v-else-if="k === '#'" class="layers">
                <div class="combo">
                  <svg width="84" height="18" viewBox="0 0 84 18" aria-hidden="true">
                    <circle cx="7" cy="7" r="5" fill="#ffa80a" /><rect x="5" y="13" width="4" height="3" fill="#777" />
                    <circle cx="24" cy="9" r="4" fill="#ffa80a" />
                    <path d="M24 1V4M24 14V17M16 9H19M29 9H32M18 3L21 6M27 12L30 15M30 3L27 6M21 12L18 15" stroke="#ffa80a" stroke-width="1.3" />
                    <path d="M37.5 6V2.5H41M47 2.5H50.5V6M37.5 12V15.5H41M40 5H48V8M40 5V13H43" fill="none" stroke="#666" stroke-width="1.3" />
                    <circle cx="49" cy="13" r="3" fill="#ffa80a" />
                    <path d="M49 8V9M49 17V18M44 13H45M53 13H54M46 10L47 11M52 10L51 11" stroke="#ffa80a" />
                    <rect x="58" y="8" width="10" height="8" fill="#ffa80a" /><path d="M66 8V4Q66 2 68 2T70 4V7" fill="none" stroke="#ffa80a" stroke-width="2" /><rect x="62" y="10" width="1" height="4" fill="#fff" />
                  </svg>
                  <i class="swatch"></i>
                  <select aria-label="Current layer"><option>foam</option></select>
                  <svg class="chev" width="10" height="6"><path d="M1 1L5 5L9 1" /></svg>
                </div>
              </div>
              <button v-else class="tool" :aria-label="k"><Ico :n="k" class="i32" /></button>
            </template>
          </div>
        </div>
        <div class="float">
          <i class="grip"></i>
          <button v-for="k in floating" :key="k" class="tool" :aria-label="k"><Ico :n="k" class="i32" /></button>
          <button class="fx" aria-label="Close toolbar"><svg width="7" height="7"><path d="M1 1L6 6M6 1L1 6" /></svg></button>
        </div>
      </section>

      <main class="canvas">
        <svg class="scene" width="100%" height="100%">
          <line v-for="g in gridX" :key="'x' + g.p" :x1="g.p" :x2="g.p" y1="0" y2="100%" :class="g.major ? 'maj' : 'min'" />
          <line v-for="g in gridY" :key="'y' + g.p" :y1="g.p" :y2="g.p" x1="0" x2="100%" :class="g.major ? 'maj' : 'min'" />
          <path class="wall" d="M263.5 70V27.5H997.5V50M954 243.5H997.5V221" />
          <path class="edge" d="M264 70V243H954M997 49V221" />
          <path class="foam" d="M264 70.5H954.5M954.5 243V49.5H997M954 221.5H997" />
          <line v-for="s in studs" :key="s" class="foam" :x1="s" :x2="s" y1="70" y2="243" />
          <text x="3" y="18" class="view">[−][Top][2D Wireframe]</text>
          <svg y="100%" overflow="visible">
            <path class="ucs" d="M9.5 -61V-9.5H59M5.5 -14.5h9v9h-9z" />
            <text x="11" y="-65" class="axis">Y</text>
            <text x="63" y="-11" class="axis">X</text>
          </svg>
        </svg>
        <div class="cube">
          <b class="n">N</b><b class="e">E</b><b class="s">S</b><b class="w">W</b>
          <button>TOP</button>
        </div>
        <button class="wcs">WCS<svg width="9" height="6"><path d="M.5.5H8.5L4.5 5z" /></svg></button>
        <div class="nav">
          <svg width="32" height="144">
            <circle cx="26" cy="5" r="3.5" /><path d="M24 3L28 7M28 3L24 7" />
            <path d="M16 19H26V30A10.5 10.5 0 1 1 16 19z" /><circle cx="16" cy="30" r="6" /><path d="M8 37L12 34M24 37L20 34" />
            <path class="f" d="M13 49h6l-3 3zM13 119h6l-3 3zM13 134h6l-3 3z" /><path class="rule" d="M3 56.5H29" />
            <path d="M12 83L5 74Q6 71 11 75L9 65Q11 63 13 70L14 63Q16 60 18 63L19 69L21 63Q24 63 22 70L24 67Q27 68 22 83z" />
            <path d="M5 91L19 104M19 91L5 104M5 94V91H8M16 91H19V94M5 101V104H8" /><circle cx="20" cy="104" r="5" /><path d="M24 108L28 112" stroke-width="2.5" />
          </svg>
        </div>
      </main>

      <section class="command">
        <div class="gutter">
          <svg width="18" height="8"><path d="M0 1.5H18M0 4.5H18" stroke-dasharray="2 1" /></svg>
          <svg width="10" height="10"><path d="M1 1L9 9M9 1L1 9" stroke-width="2" /></svg>
          <svg width="16" height="16"><path d="M1 15L9 7" stroke-width="3" /><path d="M12 1.5A3.5 3.5 0 1 0 14.5 5" stroke-width="2.5" /></svg>
        </div>
        <div class="console">
          <pre class="log"><template v-for="(l, i) in log" :key="i">{{ l + '\n' }}</template></pre>
          <label class="prompt">
            <svg width="26" height="12"><path d="M.5.5H15.5V11.5H.5zM0 2H16M3 4.5L5 6.5L3 8.5M7 8.5H11" /><path class="f" d="M18 3h8l-4 4z" /></svg>
            <input type="text" aria-label="Command line" placeholder="Type a command" />
          </label>
        </div>
      </section>

      <nav class="layouts">
        <button class="ham" aria-label="Layout list"><i></i><i></i><i></i></button>
        <button class="model">Model</button>
        <button class="lay">Layout1</button>
        <i class="slash"></i>
        <button class="lay">Layout2</button>
        <i class="slash"></i>
        <button class="add" aria-label="New layout"><svg width="14" height="14"><path d="M0 7H14M7 0V14" /></svg></button>
        <i class="slash"></i>
      </nav>

      <footer class="status">
        <div class="hint"></div>
        <button class="coords">3'-5 7/16", 10'-0 5/8", 0'-0"</button>
        <div v-for="(c, i) in status" :key="i" class="cell" :class="{ gap: c.gap }">
          <template v-for="(k, j) in c.items" :key="j">
            <button v-if="k === '>'" class="more" aria-label="Options"><i class="caret big"></i></button>
            <span v-else-if="k[0] === '='" class="say">{{ k.slice(1) }}</span>
            <button v-else class="sb" :class="{ on: k[0] === '*' }" :aria-label="k.replace('*', '')"><Ico :n="k.replace('*', '')" class="i16" /></button>
          </template>
        </div>
      </footer>
    </div>
  </div>
</template>

<style>
body { margin: 0; background: #fff; }
</style>

<style scoped>
.desk {
  box-sizing: border-box;
  height: 100vh;
  padding: 0 0 11px 2px;
  overflow: hidden;
  background: linear-gradient(#4a90c8, #4a90c8) 0 0 / 2px 31px no-repeat;
  font: 12px/16px "Open Sans", "Noto Sans", sans-serif;
  color: #f5f5f5;
}
.defs { position: absolute; width: 0; height: 0; }
.app {
  box-sizing: border-box;
  height: 100%;
  display: flex;
  flex-direction: column;
  padding: 0 3px;
  background: #222933;
  border-left: 1px solid #0a93dc;
  border-right: 1px solid #0a93dc;
}
button { background: none; border: 0; padding: 0; margin: 0; color: inherit; font: inherit; display: flex; align-items: center; white-space: nowrap; }
svg { display: block; flex: none; }
i { display: block; flex: none; }
.i16 { width: 16px; height: 16px; }
.i32 { width: 32px; height: 32px; }
.caret { width: 0; height: 0; border: 3px solid transparent; border-top-color: #d9d9d9; border-bottom: 0; }
.caret.big { border-width: 4px; border-bottom: 0; }
.caret.side { border: 4px solid transparent; border-left-color: #d9d9d9; border-right: 0; }

.title { height: 30px; display: flex; align-items: center; flex: none; }
.logo { width: 24px; height: 22px; margin-left: 11px; justify-content: center; background: #e5114f; border-left: 3px solid #f0648c; border-bottom: 2px solid #8d0a32; font: bold 15px/18px "Open Sans", sans-serif; color: #fff; }
.title > .logo + .caret { margin: 0 11px 0 3px; }
.quick { display: flex; align-items: center; gap: 8px; }
.quick .caret { margin: 0 -1px 0 -2px; }
.custom { width: 0; height: 0; margin: 0 9px 0 8px; border: 4px solid transparent; border-top-color: #d9d9d9; border-bottom: 0; position: relative; }
.custom::before { content: ""; position: absolute; left: -4px; top: -7px; width: 8px; height: 1px; background: #d9d9d9; }
.share { gap: 4px; color: #8accff; width: 70px; }
.product { width: 142px; white-space: nowrap; }
.file { width: 167px; white-space: nowrap; }
.title > .caret.side { margin: 0 7px 0 0; }
.find { box-sizing: border-box; width: 178px; height: 20px; border: 0; padding: 0 3px; background: #454f61; color: #fff; font: italic 12px/20px "Open Sans", sans-serif; }
.find::placeholder { color: #b9bec6; opacity: 1; }
.gl { margin-left: 6px; }
.user { gap: 5px; margin-left: 7px; width: 105px; }
.title .cartb { margin-left: 11px; }
.gl + .caret { margin-left: 5px; }
.vline { width: 1px; height: 18px; margin: 0 3px 0 10px; background: #4a5466; }
.title .gl + .caret + .gl { margin-left: 8px; }
.win { display: flex; gap: 34px; margin-left: auto; margin-right: 14px; }
.win svg { fill: none; stroke: #fff; stroke-width: 1; }

.menu { display: flex; align-items: center; gap: 22px; flex: none; padding: 2px 0 0 17px; margin: 0 -3px; box-sizing: border-box; height: 22px; border-bottom: 1px solid #3b4453; color: #bfc3c9; }
.menu .win.inner { gap: 20px; margin-right: 13px; }
.tabs { height: 24px; display: flex; align-items: flex-end; padding-left: 3px; flex: none; color: #bfc3c9; }
.tabs button { height: 20px; padding: 0 9px; }
.tabs .on { background: #3b4453; color: #fff; }
.tabs .collapse { width: 15px; height: 8px; padding: 0; margin: 0 5px 5px 16px; background: #f2f2f2; justify-content: center; }
.tabs .caret { margin-bottom: 7px; }
.up { border: 3px solid transparent; border-bottom-color: #555; border-top: 0; }

.ribbon { height: 100px; padding-top: 1px; box-sizing: border-box; flex: none; display: grid; grid-template-columns: 51px 45px 57px 235px 109px 108px 112px 94px 50px 105px 1fr; background: #3b4453; margin: 0 0 0 1px; }
.panel { display: flex; flex-direction: column; border-right: 1px solid #222933; margin: 1px 0; min-width: 0; }
.panel:last-child { border: 0; align-items: flex-start; padding-left: 5px; }
.body { box-sizing: border-box; height: 77px; display: flex; justify-content: center; flex: none; }
.body.icons { gap: 6px; padding-top: 1px; }
.body.tall { justify-content: flex-start; padding: 3px 0 1px; }
.body.tall button { flex-direction: column; width: 58px; justify-content: flex-start; padding-top: 3px; box-sizing: border-box; border-right: 1px solid #222933; gap: 3px; }
.body.tall button:first-child { width: 46px; padding-right: 3px; }
.body.tall button:last-child { width: 72px; border: 0; padding-right: 0; }
.body.wide { padding: 1px 4px 0 0; }
.body.wide button { gap: 5px; }
.body.wide .cap { padding-top: 3px; }
.body.wide .caret { margin: 2px auto 0; }
.ptitle { display: flex; align-items: center; height: 20px; justify-content: center; white-space: nowrap; }
.ptitle span { flex: 1; text-align: center; }
.ptitle svg { margin: 2px 5px 0 0; fill: none; stroke: #d9d9d9; }

.files, .layouts { display: flex; align-items: center; flex: none; }
.files { height: 26px; padding: 2px 0 0 16px; box-sizing: border-box; }
.ham { flex-direction: column; gap: 3px; width: 16px; }
.ham i { width: 16px; height: 2px; background: #e4e4e4; }
.slash { width: 1px; height: 17px; background: #5a6474; transform: rotate(24deg); }
.files .slash { margin: 0 11px 0 13px; }
.ftab { box-sizing: border-box; width: 114px; height: 23px; margin-left: 6px; padding-left: 15px; gap: 5px; font-weight: bold; background: #3b4453; clip-path: polygon(9px 0, 100% 0, calc(100% - 9px) 100%, 0 100%); }
.ftab svg { stroke: #b4b9c1; stroke-width: 2; }
.files .add { margin: 0 0 0 10px; }
.add svg { stroke: #e4e4e4; stroke-width: 2; }

.dock { background: #3b4453; padding: 4px 0; margin: 0 -1px 0 0; display: flex; flex-direction: column; gap: 3px; flex: none; position: relative; }
.trow { display: flex; gap: 1px; overflow: hidden; }
.bar { box-sizing: border-box; height: 40px; flex: none; display: flex; align-items: center; border: 1px solid #262d38; padding-right: 3px; }
.bar > .tool:not(:last-child) { margin-right: 7px; }
.grip {
  width: 5px;
  height: 13px;
  margin: 0 5px 13px 1px;
  background:
    repeating-linear-gradient(180deg, transparent 0 1px, #3b4453 1px 2px),
    repeating-linear-gradient(90deg, #d4d7da 0 1px, #3b4453 1px 2px);
}
.sep { width: 6px; height: 34px; box-sizing: border-box; border-left: 1px solid #69717e; }
.drop { width: 9px; height: 32px; }
.drop .caret { margin-left: -2px; }
.layers { align-self: stretch; width: 300px; margin: 0 3px 0 -3px; }
.combo { box-sizing: border-box; height: 22px; display: flex; align-items: center; background: #e2e2e2; border: 1px solid #c2c6cc; padding: 0 4px; }
.swatch { width: 12px; height: 12px; margin-left: -8px; background: #00f; box-shadow: 0 0 0 1px #666; }
select { appearance: none; flex: 1; border: 0; background: none; padding: 0 5px; color: #111; font: 12px/16px "Open Sans", sans-serif; }
.chev { fill: none; stroke: #444; }
.float { position: absolute; left: 194px; top: -2px; height: 39px; box-sizing: border-box; display: flex; align-items: flex-start; padding: 2px 0 0 1px; background: #3b4453; border: 1px solid #222933; z-index: 2; }
.float .grip { margin: 0 4px 0 1px; }
.float .tool { margin-right: 7px; }
.float .tool:nth-last-child(2) { margin-right: 4px; }
.fx { margin-top: -1px; }
.fx svg { stroke: #fff; stroke-width: 2; }

.canvas { flex: 1; min-height: 0; position: relative; background: #060606; overflow: hidden; }
.scene { position: absolute; inset: 0; font: 12px "Open Sans", sans-serif; }
.min { stroke: #15161d; stroke-width: 1; shape-rendering: crispEdges; }
.maj { stroke: #292c38; stroke-width: 1; shape-rendering: crispEdges; }
.wall, .edge, .foam, .ucs { fill: none; }
.wall { stroke: #dcdcdc; stroke-width: 1; }
.edge { stroke: #3c3cc8; stroke-width: 2; }
.foam { stroke: #0000e0; stroke-width: 1; }
line.foam { stroke-width: 2; stroke: #0000c8; }
.ucs { stroke: #e8e8e8; }
.view { fill: #e8e8e8; }
.axis { fill: #e8e8e8; font: 18px "Liberation Sans", sans-serif; }
.cube { position: absolute; right: 10px; top: 9px; width: 44px; height: 44px; box-sizing: border-box; border: 5px solid #333; border-radius: 50%; display: flex; align-items: center; justify-content: center; }
.cube button { width: 20px; height: 20px; background: #a8a8a8; border: 1px solid #c4c4c4; color: #444; justify-content: center; font: bold 6px/8px "Liberation Sans", sans-serif; }
.cube b { position: absolute; font: bold 8px/8px "Liberation Sans", sans-serif; color: #b8b8b8; }
.cube .n { top: -6px; }
.cube .s { bottom: -6px; }
.cube .e { right: -7px; }
.cube .w { left: -8px; }
.wcs { position: absolute; right: 9px; top: 64px; width: 48px; height: 18px; box-sizing: border-box; padding-left: 3px; gap: 6px; border: 1px solid #777; border-radius: 4px; background: #8e8e9a; color: #3e3e46; font: 11px/14px "Liberation Sans", sans-serif; }
.wcs svg { fill: none; stroke: #c8c8d2; }
.nav { position: absolute; right: 4px; top: 99px; width: 32px; height: 144px; background: #4c4c4c; border-radius: 3px; }
.nav svg { fill: none; stroke: #303030; stroke-width: 1; }
.nav .f { fill: #303030; }
.nav .rule { stroke: #5e5e5e; }

.command { display: flex; flex: none; background: #2d3541; border-top: 4px solid #3b4453; border-bottom: 4px solid #3b4453; }
.gutter { width: 25px; padding: 5px 2px 0 0; box-sizing: border-box; display: flex; flex-direction: column; align-items: center; gap: 6px; }
.gutter svg { fill: none; stroke: #d4d4d4; }
.gutter svg:last-child { margin-top: 4px; }
.console { flex: 1; min-width: 0; border-top: 1px solid #222933; color: #111; font: 12px/15px "DejaVu Sans Mono", "Liberation Mono", monospace; }
.log { margin: 0; padding: 0 2px 1px; font: inherit; background: #c8c8c8; border-bottom: 1px solid #222933; overflow: hidden; }
.prompt { display: flex; align-items: center; height: 20px; background: #fff; padding-left: 4px; gap: 4px; border-bottom: 1px solid #222933; }
.prompt svg { fill: none; stroke: #555; }
.prompt .f { fill: #666; stroke: none; }
.prompt input { flex: 1; border: 0; padding: 0 2px; background: none; font: italic 12px/18px "DejaVu Sans Mono", monospace; outline: 0; }
.prompt input::placeholder { color: #777; opacity: 1; }

.layouts { height: 27px; padding-left: 16px; }
.layouts .ham { margin-bottom: 3px; }
.model { width: 69px; height: 24px; margin: 0 7px 2px 9px; justify-content: center; background: #3b4453; font-weight: bold; clip-path: polygon(10px 0, 100% 0, calc(100% - 10px) 100%, 0 100%); }
.lay { margin-bottom: 2px; width: 43px; }
.layouts .slash { margin: 0 11px 2px 11px; }
.layouts .add { margin-bottom: 2px; }

.status { height: 31px; flex: none; display: flex; align-items: flex-start; padding: 3px 1px 0 2px; box-sizing: border-box; }
.hint, .coords, .cell { height: 24px; background: #3b4453; flex: none; }
.hint { width: 200px; margin-right: 4px; }
.coords { width: 180px; box-sizing: border-box; justify-content: flex-end; padding-right: 5px; margin-right: 2px; }
.cell { display: flex; align-items: center; margin-left: 1px; }
.cell.gap { margin-left: 3px; }
.sb { width: 22px; height: 22px; margin: 0 1px; justify-content: center; }
.sb.on { background: #5d8dc2; }
.more { width: 16px; height: 24px; justify-content: center; }
.say { padding: 0 0 0 3px; white-space: nowrap; }
</style>
